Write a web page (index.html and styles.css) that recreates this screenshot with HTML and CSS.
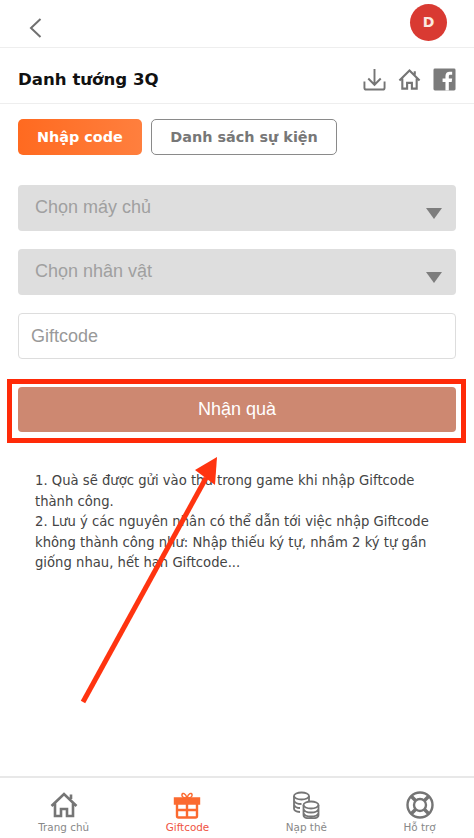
FILE: index.html
```html
<!DOCTYPE html>
<html lang="en">
<head>
  <meta charset="UTF-8" />
  <title>Giftcode</title>
  <link rel="stylesheet" href="styles.css">
</head>
<body>
  <div class="page">
    <div class="topbar">
      <svg class="back" width="14" height="20" viewBox="0 0 14 20"><path d="M12.500 1 3 10l9.500 9" fill="none" stroke="#707070" stroke-width="2"/></svg>
      <div class="avatar">D</div>
    </div>
    <div class="titlebar">
      <h1>Danh tướng 3Q</h1>
      <div class="title-icons">
        <svg width="23" height="23" viewBox="0 0 24 24" fill="none" stroke="#757575" stroke-width="2"><path d="M12 1v16M5.500 11l6.500 6.500 6.500-6.500M1.500 14v6.500q0 2 2 2h17q2 0 2-2V14"/></svg>
        <svg width="23" height="23" viewBox="0 0 24 24" fill="none" stroke="#757575" stroke-width="2.200"><path d="M1.500 13 12 2.500 22.500 13M4.500 11v10.500h5v-6h5v6h5V11M17.500 7V3.500"/></svg>
        <svg width="23" height="23" viewBox="0 0 24 24"><rect x="0.500" y="0.500" width="23" height="23" rx="1.500" fill="#7b7b7b"/><path d="M16.500 23.500v-9h3l.5-3.500h-3.500V8.800c0-1 .3-1.700 1.800-1.700H20V4q-1-.2-2.600-.2c-2.700 0-4.400 1.600-4.400 4.500V11H10v3.500h3v9z" fill="#fff"/></svg>
      </div>
    </div>
    <div class="tabs">
      <div class="tab tab-active">Nhập code</div>
      <div class="tab">Danh sách sự kiện</div>
    </div>
    <form class="form">
      <div class="select"><span>Chọn máy chủ</span><i class="caret"></i></div>
      <div class="select"><span>Chọn nhân vật</span><i class="caret"></i></div>
      <input class="code-input" type="text" placeholder="Giftcode">
      <div class="submit-wrap">
        <div class="submit">Nhận quà</div>
      </div>
    </form>
    <div class="notes">
      1. Quà sẽ được gửi vào thư trong game khi nhập Giftcode thành công.<br>
      2. Lưu ý các nguyên nhân có thể dẫn tới việc nhập Giftcode không thành công như: Nhập thiếu ký tự, nhầm 2 ký tự gần giống nhau, hết hạn Giftcode...
    </div>
    <nav class="bottom-nav">
      <div class="nav-item">
        <svg width="28" height="28" viewBox="0 0 28 28" fill="none" stroke="#757575" stroke-width="2.600"><path d="M1.500 15 14 3 26.500 15M5 12.500V25h6v-7h6v7h6V12.500M21 8V3.500"/></svg>
        <span>Trang chủ</span>
      </div>
      <div class="nav-item nav-active">
        <svg width="28" height="28" viewBox="0 0 28 28" fill="none" stroke="#fb6a30" stroke-width="2.400"><path d="M14 7C10 7 8.500 5.500 9 3.500S12.500 2 14 7c1.500-5 4.500-5.500 5-3.500S18 7 14 7z" stroke-width="1.500"/><path d="M2 7.500h24v5H2z" fill="#fb6a30"/><path d="M4 12v13q0 1.500 1.500 1.500h17q1.500 0 1.500-1.500V12M14 8v18M4 19h20"/></svg>
        <span>Giftcode</span>
      </div>
      <div class="nav-item">
        <svg width="28" height="28" viewBox="0 0 28 28" fill="none" stroke="#757575" stroke-width="1.800"><ellipse cx="9.500" cy="5" rx="7.500" ry="3.500"/><path d="M2 5v12.500q0 3 6 3.500M2 9.500q1 3.500 7.500 3.500M2 13.500q1 3.500 6 3.500M17 5v5"/><ellipse cx="19" cy="14" rx="7.500" ry="3.500"/><path d="M11.500 14v10q0 3.500 7.500 3.500t7.500-3.500V14M11.500 18q1 3.500 7.500 3.500t7.500-3.500M11.500 22q1 3.500 7.500 3.500t7.500-3.500"/></svg>
        <span>Nạp thẻ</span>
      </div>
      <div class="nav-item">
        <svg width="28" height="28" viewBox="0 0 28 28" fill="none" stroke="#757575" stroke-width="2.400"><circle cx="14" cy="14" r="12.500"/><circle cx="14" cy="14" r="6"/><path d="m5 5 5 5M23 5l-5 5M5 23l5-5M23 23l-5-5" stroke-width="3.500"/></svg>
        <span>Hỗ trợ</span>
      </div>
    </nav>
    <!-- annotation drawn over the screenshot -->
    <svg class="arrow" width="474" height="838" viewBox="0 0 474 838">
      <path d="M83 702 206 478" stroke="#ff3410" stroke-width="5" fill="none"/>
      <path d="M217 457 195 470 215 485z" fill="#ff3410"/>
    </svg>
  </div>
</body>
</html>
```
FILE: styles.css
```css
* {
  box-sizing: border-box;
}
html, body {
  margin: 0;
  height: 100%;
}
body {
  font-family: "Liberation Sans", Arial, sans-serif;
  background: #fff;
}
.page {
  position: relative;
  height: 838px;
  display: flex;
  flex-direction: column;
  overflow: hidden;
}
.topbar {
  height: 48px;
  padding: 3px 27px 6px 28px;
  display: flex;
  justify-content: space-between;
  align-items: center;
  border-bottom: 1px solid #eee;
}
.back {
  margin-top: 11px;
}
.avatar {
  width: 37px;
  height: 37px;
  border-radius: 50%;
  background: #d93a32;
  color: #fbe9e0;
  font: bold 14px "DejaVu Sans", sans-serif;
  display: flex;
  align-items: center;
  justify-content: center;
}
.titlebar {
  height: 56px;
  padding: 8px 18px 0;
  display: flex;
  justify-content: space-between;
  align-items: center;
  border-bottom: 1px solid #eee;
}
h1 {
  margin: 0;
  font: bold 16.600px "DejaVu Sans", sans-serif;
  color: #111;
}
.title-icons {
  display: flex;
  gap: 12px;
}
.tabs {
  display: flex;
  gap: 9px;
  padding: 15px 18px 0;
}
.tab {
  height: 36px;
  padding: 0 18.500px;
  border: 1px solid #8a8a8a;
  border-radius: 5px;
  font: bold 14.400px "DejaVu Sans", sans-serif;
  color: #777;
  display: flex;
  align-items: center;
}
.tab-active {
  border: none;
  padding: 0 19px;
  color: #fff;
  background: linear-gradient(90deg, #ff6a20, #ff7f3e);
}
.form {
  display: flex;
  flex-direction: column;
  gap: 18px;
  padding: 30px 18px 0;
}
.select {
  height: 46px;
  padding: 0 14px 2px 17px;
  border-radius: 4px;
  background: #dedede;
  color: #a0a0a0;
  font-size: 18px;
  display: flex;
  justify-content: space-between;
  align-items: center;
}
.caret {
  width: 0;
  height: 0;
  margin-top: 13px;
  border-left: 8px solid transparent;
  border-right: 8px solid transparent;
  border-top: 11px solid #7d7d7d;
}
.code-input {
  height: 46px;
  padding: 0 12px;
  border: 1px solid #ddd;
  border-radius: 4px;
  font: 18px "Liberation Sans", Arial, sans-serif;
}
.code-input::placeholder {
  color: #999;
  opacity: 1;
}
.submit-wrap {
  margin: 2px -10px 0 -11px;
  padding: 3px 5px 6px 6px;
  border: 5px solid #ff2a08;
}
.submit {
  height: 45px;
  border-radius: 4px;
  background: #cd8871;
  color: #fff;
  font-size: 18px;
  display: flex;
  align-items: center;
  justify-content: center;
}
.notes {
  padding: 28px 40px 0 35px;
  font: 13.200px/20.600px "DejaVu Sans", sans-serif;
  color: #444;
}
.bottom-nav {
  margin-top: auto;
  height: 62px;
  padding-top: 13px;
  border-top: 2px solid #e8e8e8;
  display: flex;
  justify-content: space-around;
}
.nav-item {
  display: flex;
  flex-direction: column;
  align-items: center;
  gap: 2px;
  font: 10.400px "DejaVu Sans", sans-serif;
  color: #888;
}
.nav-active {
  color: #f0533f;
}
.arrow {
  position: absolute;
  top: 0;
  left: 0;
  pointer-events: none;
}
```
